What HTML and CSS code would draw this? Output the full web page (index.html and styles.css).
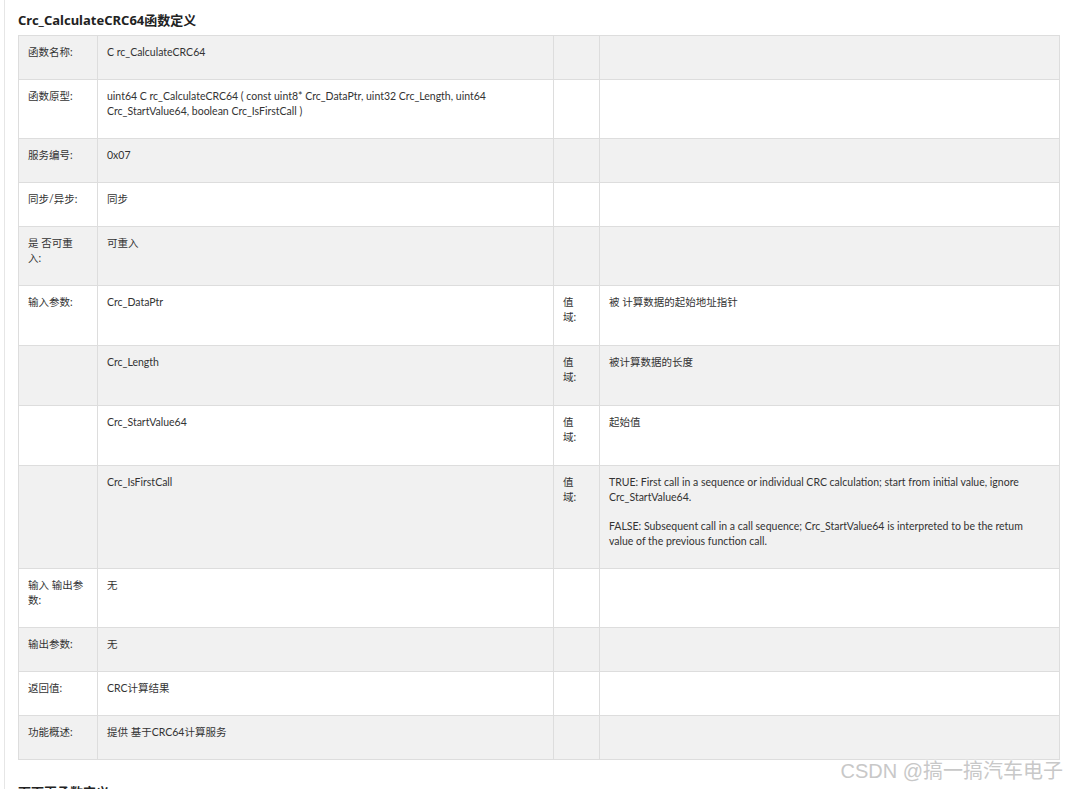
FILE: index.html
```html
<!DOCTYPE html>
<html lang="zh-CN">
<head>
    <meta charset="UTF-8">
    <meta name="viewport" content="width=device-width, initial-scale=1.0">
    <title>Crc_CalculateCRC64函数定义</title>
    <link rel="stylesheet" href="styles.css">
</head>
<body>
    <div class="article">
        <h3>Crc_CalculateCRC64函数定义</h3>
        <table class="api-table">
            <colgroup>
                <col class="col-label">
                <col class="col-value">
                <col class="col-range">
                <col class="col-desc">
            </colgroup>
            <tbody>
                <tr>
                    <td class="label"><p>函数名称:</p></td>
                    <td><p>C rc_CalculateCRC64</p></td>
                    <td class="range"></td>
                    <td></td>
                </tr>
                <tr>
                    <td class="label"><p>函数原型:</p></td>
                    <td><p>uint64 C rc_CalculateCRC64 ( const uint8* Crc_DataPtr, uint32 Crc_Length, uint64 Crc_StartValue64, boolean Crc_IsFirstCall )</p></td>
                    <td class="range"></td>
                    <td></td>
                </tr>
                <tr>
                    <td class="label"><p>服务编号:</p></td>
                    <td><p>0x07</p></td>
                    <td class="range"></td>
                    <td></td>
                </tr>
                <tr>
                    <td class="label"><p>同步/异步:</p></td>
                    <td><p>同步</p></td>
                    <td class="range"></td>
                    <td></td>
                </tr>
                <tr>
                    <td class="label"><p>是 否可重入:</p></td>
                    <td><p>可重入</p></td>
                    <td class="range"></td>
                    <td></td>
                </tr>
                <tr>
                    <td class="label"><p>输入参数:</p></td>
                    <td><p>Crc_DataPtr</p></td>
                    <td class="range"><p>值域:</p></td>
                    <td><p>被 计算数据的起始地址指针</p></td>
                </tr>
                <tr>
                    <td class="label"></td>
                    <td><p>Crc_Length</p></td>
                    <td class="range"><p>值域:</p></td>
                    <td><p>被计算数据的长度</p></td>
                </tr>
                <tr>
                    <td class="label"></td>
                    <td><p>Crc_StartValue64</p></td>
                    <td class="range"><p>值域:</p></td>
                    <td><p>起始值</p></td>
                </tr>
                <tr>
                    <td class="label"></td>
                    <td><p>Crc_IsFirstCall</p></td>
                    <td class="range"><p>值域:</p></td>
                    <td>
                        <p>TRUE: First call in a sequence or individual CRC calculation; start from initial value, ignore Crc_StartValue64.</p>
                        <p>FALSE: Subsequent call in a call sequence; Crc_StartValue64 is interpreted to be the retum value of the previous function call.</p>
                    </td>
                </tr>
                <tr>
                    <td class="label"><p>输入 输出参数:</p></td>
                    <td><p>无</p></td>
                    <td class="range"></td>
                    <td></td>
                </tr>
                <tr>
                    <td class="label"><p>输出参数:</p></td>
                    <td><p>无</p></td>
                    <td class="range"></td>
                    <td></td>
                </tr>
                <tr>
                    <td class="label"><p>返回值:</p></td>
                    <td><p>CRC计算结果</p></td>
                    <td class="range"></td>
                    <td></td>
                </tr>
                <tr>
                    <td class="label"><p>功能概述:</p></td>
                    <td><p>提供 基于CRC64计算服务</p></td>
                    <td class="range"></td>
                    <td></td>
                </tr>
            </tbody>
        </table>
        <h3 class="next-title">下面再函数定义</h3>
    </div>
    <div class="watermark">CSDN @搞一搞汽车电子</div>
</body>
</html>
```

FILE: styles.css
```css
* {
    box-sizing: border-box;
    margin: 0;
    padding: 0;
}

html, body {
    height: 100%;
    overflow: hidden;
}

body {
    font-family: Lato, "Noto Sans CJK SC", sans-serif;
    font-size: 10.5px;
    color: #333;
    background-color: #fff;
    position: relative;
}

.article {
    margin-left: 4px;
    border-left: 1px solid #e6e6e6;
    padding: 10px 9px 0 13px;
    min-height: 100%;
}

h3 {
    font-family: "Noto Sans", "Noto Sans CJK SC", sans-serif;
    font-size: 13px;
    font-weight: bold;
    color: #222;
    line-height: 20px;
    margin-bottom: 5px;
}

.api-table {
    width: 1041px;
    border-collapse: collapse;
    table-layout: fixed;
}

.col-label { width: 79px; }
.col-value { width: 456px; }
.col-range { width: 46px; }
.col-desc  { width: 460px; }

.api-table td {
    border: 1px solid #ddd;
    padding: 9px 12px 8px 9px;
    vertical-align: top;
    line-height: 15px;
}

.api-table td.label {
    padding-right: 13px;
}

.api-table td.range {
    padding-right: 16px;
    padding-bottom: 9px;
}

.api-table td p {
    margin-bottom: 11px;
}

/* 段落之间稍大一点 */
.api-table td p + p {
    margin-top: 14px;
}

.api-table tr:nth-child(odd) {
    background-color: #f1f1f1;
}

.next-title {
    margin-top: 22px;
}

/* 水印 */
.watermark {
    position: absolute;
    right: 5px;
    top: 758px;
    font-family: "Liberation Sans", "Noto Sans CJK SC", sans-serif;
    font-size: 20px;
    color: #c8c8c8;
    text-shadow: 0 0 2px #fff, 0 0 2px #fff;
    line-height: 26px;
}
```
